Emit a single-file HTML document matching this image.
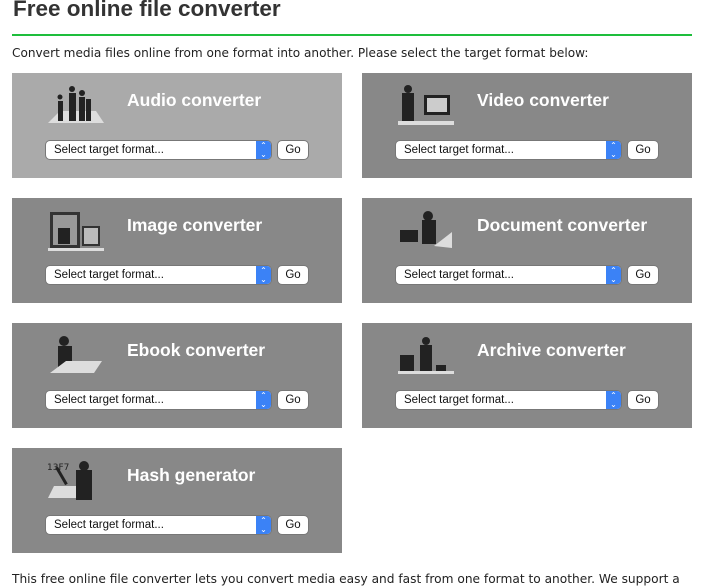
<!DOCTYPE html><html><head><style>
body{margin:0;width:708px;height:585px;overflow:hidden;background:#fff;font-family:"DejaVu Sans","Liberation Sans",sans-serif;position:relative}
h1{position:absolute;left:13px;top:-4px;margin:0;font-family:"Liberation Sans",sans-serif;font-size:22.5px;font-weight:bold;color:#333}
.line{position:absolute;left:12px;top:34px;width:680px;height:2px;background:#1ebe3c}
.intro{position:absolute;left:12px;top:46px;font-size:12.1px;color:#222}
.box{position:absolute;width:330px;height:105px;background:#888}
.box .t{position:absolute;left:115px;top:17px;color:#fff;font-weight:bold;font-family:"Liberation Sans",sans-serif;font-size:17.5px}
.sel{position:absolute;left:34px;top:68px;width:225px;height:18px;background:#fff;border-radius:4px;box-shadow:0 0 0 1px #777;font-family:"Liberation Sans",sans-serif;font-size:11.5px;line-height:18px;color:#111}
.sel span{margin-left:8px}
.sel i{position:absolute;right:0;top:0;width:15px;height:18px;background:#3b82f6;border-radius:0 4px 4px 0;color:#fff;font-style:normal;font-size:8px;text-align:center;line-height:9px}
.go{position:absolute;left:266px;top:68px;width:30px;height:18px;background:#fff;border-radius:4px;box-shadow:0 0 0 1px #777;font-family:"Liberation Sans",sans-serif;font-size:11.5px;line-height:18px;text-align:center;color:#111}
.ic{position:absolute;left:34px;top:10px}
.bottom{position:absolute;left:12px;top:572px;font-size:12.2px;color:#222;white-space:nowrap}
</style></head><body>
<h1>Free online file converter</h1>
<div class="line"></div>
<div class="intro">Convert media files online from one format into another. Please select the target format below:</div>

<div class="box" style="left:12px;top:73px;background:#aaa"><svg class="ic" width="60" height="45"><polygon points="2,40 14,28 50,28 58,40" fill="#ddd"/><g fill="#222"><rect x="12" y="18" width="5" height="20"/><rect x="23" y="10" width="7" height="28"/><rect x="33" y="14" width="6" height="24"/><rect x="40" y="16" width="5" height="22"/><circle cx="26" cy="6" r="3"/><circle cx="36" cy="10" r="3"/><circle cx="14" cy="14" r="2.5"/></g></svg><div class="t">Audio converter</div><div class="sel"><span>Select target format...</span><i>⌃<br>⌄</i></div><div class="go">Go</div></div>

<div class="box" style="left:362px;top:73px"><svg class="ic" width="60" height="45"><rect x="28" y="12" width="26" height="20" fill="#222"/><rect x="31" y="15" width="20" height="14" fill="#ccc"/><rect x="6" y="10" width="12" height="30" fill="#222"/><circle cx="12" cy="6" r="4" fill="#222"/><rect x="2" y="38" width="56" height="4" fill="#ddd"/></svg><div class="t">Video converter</div><div class="sel"><span>Select target format...</span><i>⌃<br>⌄</i></div><div class="go">Go</div></div>

<div class="box" style="left:12px;top:198px"><svg class="ic" width="60" height="45"><rect x="4" y="4" width="30" height="36" fill="#333"/><rect x="7" y="7" width="24" height="30" fill="#999"/><rect x="36" y="18" width="18" height="20" fill="#333"/><rect x="38" y="20" width="14" height="16" fill="#bbb"/><rect x="12" y="20" width="12" height="16" fill="#222"/><rect x="2" y="40" width="56" height="3" fill="#ddd"/></svg><div class="t">Image converter</div><div class="sel"><span>Select target format...</span><i>⌃<br>⌄</i></div><div class="go">Go</div></div>

<div class="box" style="left:362px;top:198px"><svg class="ic" width="60" height="45"><rect x="4" y="22" width="18" height="12" fill="#222"/><rect x="26" y="12" width="14" height="24" fill="#222"/><circle cx="32" cy="8" r="5" fill="#222"/><polygon points="38,38 56,24 56,40" fill="#ddd"/></svg><div class="t">Document converter</div><div class="sel"><span>Select target format...</span><i>⌃<br>⌄</i></div><div class="go">Go</div></div>

<div class="box" style="left:12px;top:323px"><svg class="ic" width="60" height="45"><circle cx="18" cy="8" r="5" fill="#222"/><rect x="12" y="13" width="14" height="26" fill="#222"/><polygon points="4,40 20,28 56,28 48,40" fill="#ddd"/></svg><div class="t">Ebook converter</div><div class="sel"><span>Select target format...</span><i>⌃<br>⌄</i></div><div class="go">Go</div></div>

<div class="box" style="left:362px;top:323px"><svg class="ic" width="60" height="45"><rect x="4" y="22" width="14" height="16" fill="#222"/><rect x="24" y="12" width="12" height="26" fill="#222"/><circle cx="30" cy="8" r="4" fill="#222"/><rect x="40" y="32" width="10" height="6" fill="#222"/><rect x="2" y="38" width="56" height="3" fill="#ddd"/></svg><div class="t">Archive converter</div><div class="sel"><span>Select target format...</span><i>⌃<br>⌄</i></div><div class="go">Go</div></div>

<div class="box" style="left:12px;top:448px"><svg class="ic" width="60" height="45"><text x="1" y="12" font-size="9" fill="#222">13F7</text><polygon points="2,40 8,28 40,28 40,40" fill="#ddd"/><rect x="30" y="12" width="16" height="30" fill="#222"/><circle cx="38" cy="8" r="5" fill="#222"/><rect x="14" y="8" width="3" height="20" fill="#222" transform="rotate(-30 15 18)"/></svg><div class="t">Hash generator</div><div class="sel"><span>Select target format...</span><i>⌃<br>⌄</i></div><div class="go">Go</div></div>

<div class="bottom">This free online file converter lets you convert media easy and fast from one format to another. We support a</div>
</body></html>
